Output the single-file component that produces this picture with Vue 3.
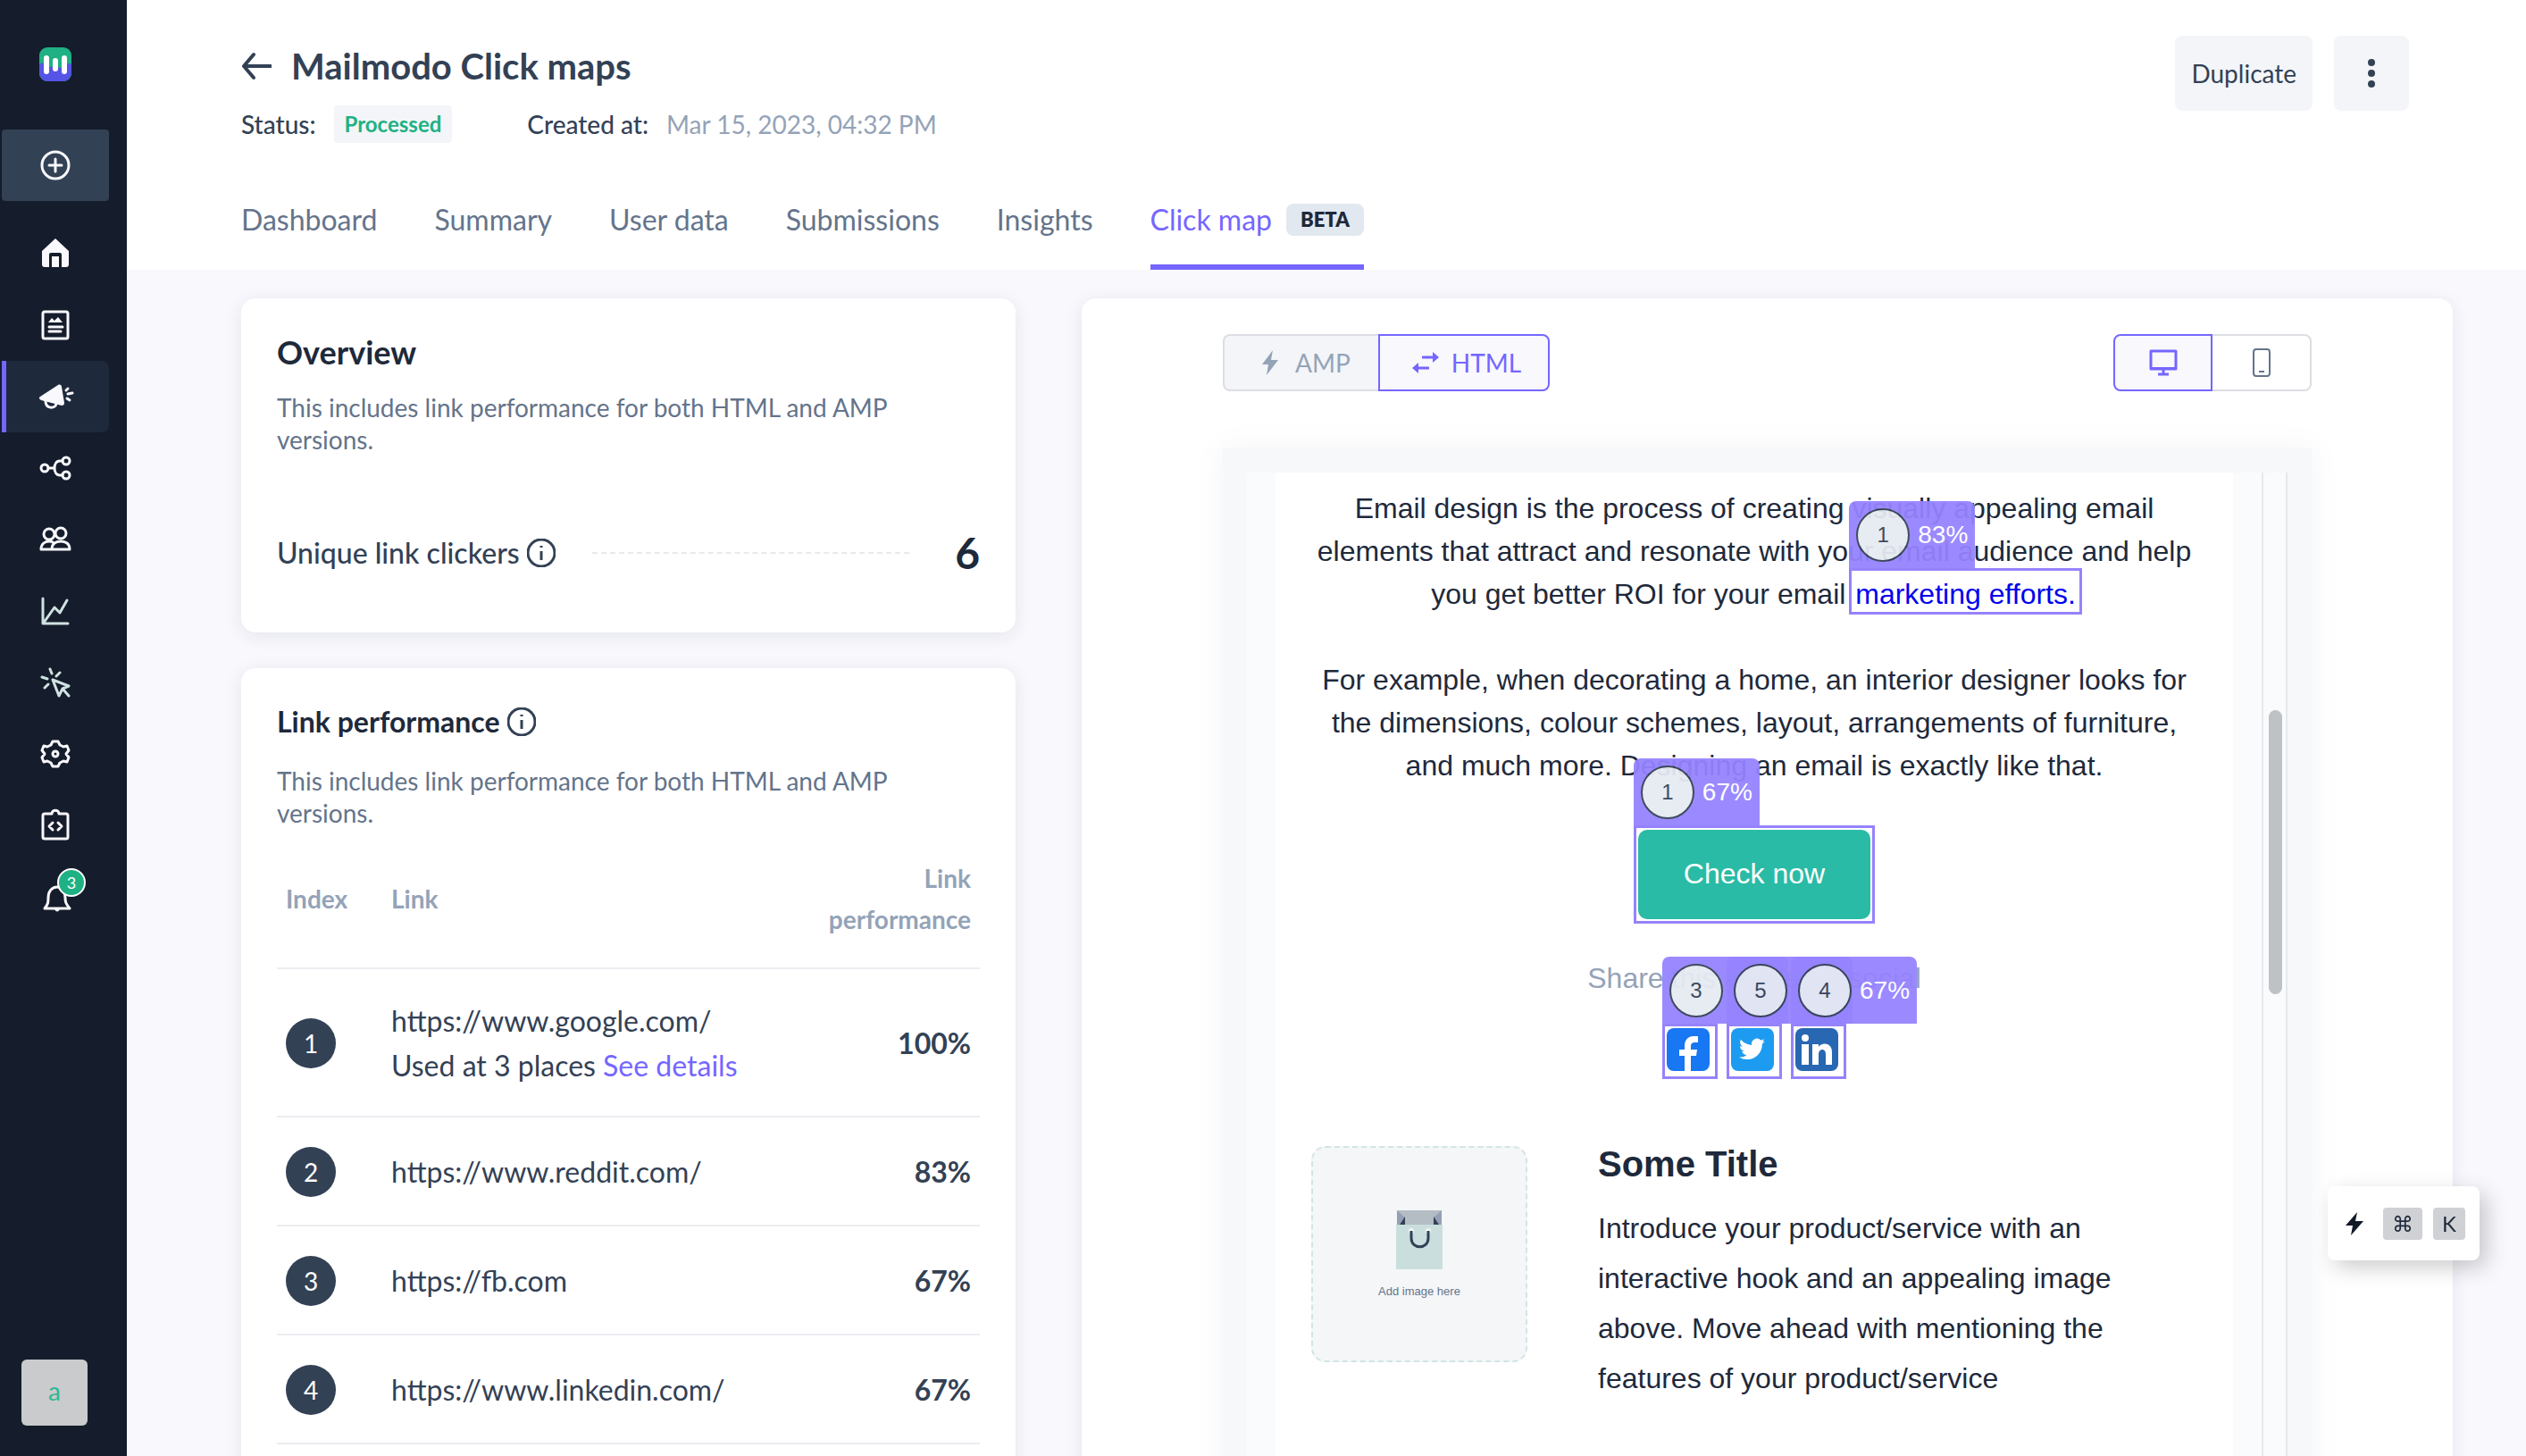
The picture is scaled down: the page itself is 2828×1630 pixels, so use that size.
<script setup>
const tabs = ['Dashboard', 'Summary', 'User data', 'Submissions', 'Insights']

const rows = [
  { n: 1, url: 'https://www.google.com/', uses: 3, share: '100%' },
  { n: 2, url: 'https://www.reddit.com/', share: '83%' },
  { n: 3, url: 'https://fb.com', share: '67%' },
  { n: 4, url: 'https://www.linkedin.com/', share: '67%' },
]
</script>

<template>
  <div class="app">
    <nav class="sidebar" aria-label="Main">
      <a href="#" class="logo" aria-label="Mailmodo">
        <svg width="36" height="38" viewBox="0 0 36 38">
          <rect width="36" height="38" rx="9" fill="#1fb184" />
          <path d="M0 19c4-3 7-1 10 2s6-2 9 0 5 3 8 0 6-4 9-2v10a9 9 0 0 1-9 9H9a9 9 0 0 1-9-9z" fill="#5654e6" />
          <path d="M8 12v15M18 15v9M28 12v15" stroke="#fff" stroke-width="6" stroke-linecap="round" />
        </svg>
      </a>
      <button class="create" aria-label="Create">
        <svg class="icon" viewBox="0 0 32 32">
          <circle cx="16" cy="16" r="15" />
          <path d="M16 9v14M9 16h14" />
        </svg>
      </button>
      <a href="#" class="item" aria-label="Home">
        <svg class="icon" viewBox="0 0 32 32">
          <path class="solid" d="M16 -1 31 13v15a3 3 0 0 1-3 3h-5V17a2 2 0 0 0-2-2H11a2 2 0 0 0-2 2v14H4a3 3 0 0 1-3-3V13zM12 19h8v12h-8z" />
        </svg>
      </a>
      <a href="#" class="item" aria-label="Templates">
        <svg class="icon" viewBox="0 0 32 32">
          <rect x="2" y="1" width="28" height="30" rx="2" />
          <path class="solid" d="M8 13l4-5 3 3 4-4 5 6z" />
          <path d="M9 18h15M9 23h13" />
        </svg>
      </a>
      <a href="#" class="item active" aria-label="Campaigns" aria-current="page">
        <svg class="icon wide" viewBox="0 0 40 32">
          <path class="solid" d="M3 16 23 3c2-1 4 0 4 2l3 18c0 2-1 3-3 3L4 20c-2-1-3-3-1-4z" />
          <path d="M9 21c0 9 11 9 12 3M32 9l2-2M34 13l5-1M33 18l3 2" />
        </svg>
      </a>
      <a href="#" class="item" aria-label="Journeys">
        <svg class="icon wide" viewBox="0 0 40 32">
          <circle cx="8" cy="16" r="4" /><circle cx="32" cy="8" r="4" /><circle cx="32" cy="24" r="4" />
          <path d="M12 16h7M28 8h-3c-4 0-6 4-6 8s2 8 6 8h3" />
        </svg>
      </a>
      <a href="#" class="item" aria-label="Contacts">
        <svg class="icon wide" viewBox="0 0 40 32">
          <circle cx="13" cy="10" r="6" /><circle cx="26" cy="9" r="6" />
          <path d="M15 27H4c0-6 4-9 9-9 2 0 3 0 4 1M16 27c0-6 4-9 10-9s10 3 10 9z" />
        </svg>
      </a>
      <a href="#" class="item" aria-label="Analytics">
        <svg class="icon mint" viewBox="0 0 32 32">
          <path d="M2 2v28h28M3 29l12-17 6 6 8-14" />
        </svg>
      </a>
      <a href="#" class="item" aria-label="Triggers">
        <svg class="icon mint" viewBox="0 0 32 32">
          <path d="M13 13l18 7-7 3-4 8zM24 23l7 8M10 1l2 5M1 10l6 2M21 5l-4 4M8 18l-4 4" />
        </svg>
      </a>
      <a href="#" class="item" aria-label="Settings">
        <svg class="icon" viewBox="0 0 32 32">
          <path d="M13 2h6l2 4 4 2 4-1 2 5-3 4 3 4-2 5-4-1-4 2-2 4h-6l-2-4-4-2-4 1-2-5 3-4-3-4 2-5 4 1 4-2z" />
          <circle cx="16" cy="16" r="3" />
        </svg>
      </a>
      <a href="#" class="item" aria-label="Developers">
        <svg class="icon" viewBox="0 0 32 32">
          <path d="M4 3h8c0-5 8-5 8 0h8q2 0 2 2v24q0 2-2 2H4q-2 0-2-2V5q0-2 2-2zM13 13l-4 4 4 4M19 13l4 4-4 4" />
        </svg>
      </a>
      <a href="#" class="item bell" aria-label="Notifications">
        <svg class="icon wide" viewBox="0 0 40 32">
          <path d="M8 29c4-5 4-7 4-12 0-7 4-12 10-12s9 5 9 12c0 5 1 7 5 12z" />
          <path class="solid" d="M19 30h6q-3 5-6 0z" />
        </svg>
        <span class="count">3</span>
      </a>
      <button class="avatar">a</button>
    </nav>

    <div class="page">
      <header class="header">
        <div class="heading">
          <div class="title-row">
            <a href="#" class="back" aria-label="Back">
              <svg width="34" height="32" viewBox="0 0 34 32">
                <path d="M14 3 3 16l11 13M3 16h30" fill="none" stroke="#334155" stroke-width="4" stroke-linecap="round" stroke-linejoin="round" />
              </svg>
            </a>
            <h1>Mailmodo Click maps</h1>
          </div>
          <div class="meta">
            <span class="label">Status:</span>
            <span class="status">Processed</span>
            <span class="label">Created at:</span>
            <time>Mar 15, 2023, 04:32 PM</time>
          </div>
          <nav class="tabs" aria-label="Campaign">
            <a v-for="t in tabs" :key="t" href="#">{{ t }}</a>
            <a href="#" class="current">Click map <span class="beta">BETA</span></a>
          </nav>
        </div>
        <div class="actions">
          <button>Duplicate</button>
          <button class="more" aria-label="More">
            <svg width="12" height="36" viewBox="0 0 12 36" fill="#334155">
              <circle cx="6" cy="6" r="4" /><circle cx="6" cy="18" r="4" /><circle cx="6" cy="30" r="4" />
            </svg>
          </button>
        </div>
      </header>

      <main class="content">
        <div class="column">
          <section class="card overview">
            <h2>Overview</h2>
            <p class="note">This includes link performance for both HTML and AMP versions.</p>
            <div class="stat">
              <span>Unique link clickers</span>
              <svg class="info" viewBox="0 0 32 32">
                <circle cx="16" cy="16" r="15" /><path d="M16 14v10M16 8v2" />
              </svg>
              <i class="dashes"></i>
              <strong>6</strong>
            </div>
          </section>

          <section class="card links">
            <h3>
              Link performance
              <svg class="info" viewBox="0 0 32 32">
                <circle cx="16" cy="16" r="15" /><path d="M16 14v10M16 8v2" />
              </svg>
            </h3>
            <p class="note">This includes link performance for both HTML and AMP versions.</p>
            <table>
              <thead>
                <tr>
                  <th class="index">Index</th>
                  <th>Link</th>
                  <th class="share">Link performance</th>
                </tr>
              </thead>
              <tbody>
                <tr v-for="r in rows" :key="r.n">
                  <td><span class="num">{{ r.n }}</span></td>
                  <td>
                    {{ r.url }}
                    <div v-if="r.uses">Used at {{ r.uses }} places <a href="#">See details</a></div>
                  </td>
                  <td class="share">{{ r.share }}</td>
                </tr>
              </tbody>
            </table>
          </section>
        </div>

        <section class="card preview">
          <div class="toolbar">
            <div class="group">
              <button class="amp">
                <svg width="20" height="28" viewBox="0 0 20 28"><path d="M13 0 1 16h7L6 28l13-17h-8z" fill="currentColor" /></svg>
                AMP
              </button>
              <button class="html on">
                <svg width="30" height="24" viewBox="0 0 30 24">
                  <path d="M11 6h14M19 18H5" stroke="currentColor" stroke-width="3" />
                  <path d="M23 0l7 6-7 6zM7 12l-7 6 7 6z" fill="currentColor" />
                </svg>
                HTML
              </button>
            </div>
            <div class="group devices">
              <button class="on" aria-label="Desktop">
                <svg width="34" height="30" viewBox="0 0 34 30">
                  <path d="M3 2h28v20H3zM17 22v6M11 28h12" fill="none" stroke="currentColor" stroke-width="3" stroke-linejoin="round" />
                  <path d="M3 20h28v3H3z" fill="currentColor" />
                </svg>
              </button>
              <button aria-label="Mobile">
                <svg width="20" height="32" viewBox="0 0 20 32">
                  <rect x="1" y="1" width="18" height="30" rx="3" fill="none" stroke="currentColor" stroke-width="2" />
                  <path d="M7 26h6" stroke="currentColor" stroke-width="2" />
                </svg>
              </button>
            </div>
          </div>

          <div class="frame">
            <div class="viewport">
              <article class="email">
                <p>
                  Email design is the process of creating visually appealing email elements that attract and
                  resonate with your email audience and help you get better ROI for your email
                  <a href="#" class="hot text">marketing efforts.<span class="tag"><b>1</b>83%</span></a>
                </p>
                <p>
                  For example, when decorating a home, an interior designer looks for the dimensions, colour
                  schemes, layout, arrangements of furniture, and much more. Designing an email is exactly
                  like that.
                </p>
                <a href="#" class="hot cta">Check now<span class="tag"><b>1</b>67%</span></a>
                <p class="share-line">Share this article on social</p>
                <div class="social">
                  <a href="#" class="hot" aria-label="Facebook">
                    <svg width="48" height="48" viewBox="0 0 48 48">
                      <rect width="48" height="48" rx="8" fill="#1877f2" />
                      <path d="M20 48V31h-6v-7h6v-4c0-7 4-11 10-11h5v7h-3c-4 0-5 2-5 4v4h7l-1 7h-6v17z" fill="#fff" />
                    </svg>
                    <span class="tag"><b>3</b></span>
                  </a>
                  <a href="#" class="hot" aria-label="Twitter">
                    <svg width="48" height="48" viewBox="0 0 48 48">
                      <rect width="48" height="48" rx="8" fill="#1d9bf0" />
                      <path transform="translate(9 9) scale(1.2)" d="M23.95 4.57a10 10 0 0 1-2.82.77 4.96 4.96 0 0 0 2.16-2.72c-.95.55-2 .95-3.13 1.18a4.92 4.92 0 0 0-8.38 4.48C7.69 8.1 4.07 6.13 1.64 3.16a4.92 4.92 0 0 0 1.52 6.57 4.9 4.9 0 0 1-2.23-.61v.06a4.93 4.93 0 0 0 3.95 4.83 5 5 0 0 1-2.21.08 4.94 4.94 0 0 0 4.6 3.42A9.87 9.87 0 0 1 0 19.54a14 14 0 0 0 7.55 2.21c9.05 0 14-7.5 14-13.98 0-.21 0-.42-.02-.63A9.94 9.94 0 0 0 24 4.59z" fill="#fff" />
                    </svg>
                    <span class="tag"><b>5</b></span>
                  </a>
                  <a href="#" class="hot" aria-label="LinkedIn">
                    <svg width="48" height="48" viewBox="0 0 48 48">
                      <rect width="48" height="48" rx="8" fill="#2867b2" />
                      <circle cx="11" cy="11" r="4" fill="#fff" />
                      <path d="M7 18h8v23H7zM19 18h7v3c3-5 15-6 15 6v14h-7V29c0-7-8-6-8 0v12h-7z" fill="#fff" />
                    </svg>
                    <span class="tag"><b>4</b>67%</span>
                  </a>
                </div>
                <div class="feature">
                  <figure>
                    <svg width="52" height="66" viewBox="0 0 52 66">
                      <path d="M1 0h50v18H1z" fill="#b4bcc4" />
                      <path d="M1 0l9 8v8H1zM51 0l-9 8v8h9z" fill="#94a0b5" />
                      <path d="M10 7v9H4zM42 7v9h6z" fill="#334155" />
                      <path d="M0 16h52v50H0z" fill="#cadfdd" />
                      <circle cx="17" cy="23" r="3" fill="#eef3f4" /><circle cx="36" cy="23" r="3" fill="#eef3f4" />
                      <path d="M17 23v8c0 13 19 13 19 0v-8" fill="none" stroke="#334155" stroke-width="3" />
                    </svg>
                    <figcaption>Add image here</figcaption>
                  </figure>
                  <div>
                    <h4>Some Title</h4>
                    <p class="intro">
                      Introduce your product/service with an interactive hook and an appealing image above. Move
                      ahead with mentioning the features of your product/service
                    </p>
                  </div>
                </div>
              </article>
              <div class="track"><div class="thumb"></div></div>
            </div>
          </div>
        </section>
      </main>
    </div>

    <button class="shortcut" aria-label="Command menu">
      <svg width="20" height="28" viewBox="0 0 20 28"><path d="M13 1 0 16h8L6 27l14-16h-9z" fill="#111827" /></svg>
      <span class="keys"><kbd>⌘</kbd><kbd>K</kbd></span>
    </button>
  </div>
</template>

<style>
body {
  margin: 0;
  overflow: hidden;
}
</style>

<style scoped>
* {
  box-sizing: border-box;
}
.app {
  display: flex;
  height: 100vh;
  overflow: hidden;
  background: #f8f8fd;
  color: #334155;
  font: 28px/34px Lato, 'Noto Sans', sans-serif;
}
a {
  color: inherit;
  text-decoration: none;
}
button {
  margin: 0;
  padding: 0;
  border: 0;
  background: none;
  color: inherit;
  font: inherit;
  cursor: pointer;
}
h1, h2, h3, h4, p, figure {
  margin: 0;
}

/* Sidebar */
.sidebar {
  display: flex;
  flex-direction: column;
  flex: none;
  width: 142px;
  padding: 53px 20px 34px 2px;
  background: #151c2b;
}
.logo {
  display: flex;
  justify-content: center;
  margin-bottom: 54px;
}
.create, .item {
  display: flex;
  align-items: center;
  justify-content: center;
  flex: none;
  height: 80px;
  border-radius: 4px;
}
.create {
  margin-bottom: 19px;
  background: #334155;
}
.item.active {
  border-left: 5px solid #7566ff;
  border-radius: 0 8px 8px 0;
  padding-right: 5px;
  background: #1e293b;
}
.icon {
  width: 32px;
  height: 32px;
  overflow: visible;
  fill: none;
  stroke: #f8f8fd;
  stroke-width: 3;
  stroke-linecap: round;
  stroke-linejoin: round;
}
.icon.wide {
  width: 40px;
}
.icon .solid {
  fill: #f8f8fd;
  stroke: none;
}
.icon.mint {
  stroke: #cfe2e2;
}
.bell {
  position: relative;
}
.count {
  position: absolute;
  top: 8px;
  left: 62px;
  width: 32px;
  height: 32px;
  border: 2px solid #fff;
  border-radius: 50%;
  background: #1fb184;
  color: #fff;
  font-size: 18px;
  line-height: 28px;
  text-align: center;
}
.avatar {
  width: 74px;
  height: 74px;
  margin: auto 0 0 22px;
  padding-bottom: 4px;
  border-radius: 6px;
  background: #c9cbcd;
  color: #2fb796;
  font-size: 28px;
}

/* Header */
.page {
  flex: 1;
  min-width: 0;
}
.header {
  display: flex;
  justify-content: space-between;
  align-items: flex-start;
  padding: 40px 131px 0 128px;
  background: #fff;
}
.heading {
  padding-top: 10px;
}
.title-row {
  display: flex;
  align-items: center;
  gap: 22px;
}
.back {
  display: flex;
}
h1 {
  font-size: 40px;
  line-height: 48px;
  font-weight: 700;
}
.meta {
  display: flex;
  align-items: center;
  height: 42px;
  margin-top: 20px;
}
.label {
  font-weight: 500;
}
.status {
  margin: 0 84px 0 20px;
  padding: 0 12px;
  border-radius: 4px;
  background: #f3f5f8;
  color: #1fb184;
  font-size: 24px;
  line-height: 42px;
  font-weight: 700;
}
time {
  margin-left: 20px;
  color: #94a3b8;
}
.tabs {
  display: flex;
  gap: 64px;
  margin-top: 67px;
  color: #64748b;
  font-size: 32px;
  line-height: 38px;
}
.tabs a {
  display: flex;
  align-items: center;
  padding-bottom: 31px;
  border-bottom: 6px solid transparent;
}
.tabs .current {
  border-color: #7566ff;
  color: #7566ff;
}
.beta {
  margin-left: 16px;
  padding: 0 16px;
  border-radius: 8px;
  background: #e2e8f0;
  color: #1e293b;
  font-size: 22px;
  line-height: 36px;
  font-weight: 800;
}
.actions {
  display: flex;
  gap: 24px;
}
.actions button {
  height: 84px;
  padding: 0 18px;
  border-radius: 8px;
  background: #f3f5f8;
}
.actions .more {
  display: flex;
  align-items: center;
  justify-content: center;
  width: 84px;
}

/* Cards */
.content {
  display: grid;
  grid-template-columns: 867fr 1535fr;
  gap: 74px;
  padding: 32px 82px 0 128px;
}
.column {
  display: flex;
  flex-direction: column;
  gap: 40px;
  min-width: 0;
}
.card {
  padding: 40px;
  border-radius: 16px;
  background: #fff;
  box-shadow: 0 4px 20px rgba(30, 41, 59, 0.09);
}
.overview {
  padding-bottom: 65px;
}
h2, h3 {
  display: flex;
  align-items: center;
  color: #1e293b;
  font-size: 36px;
  line-height: 40px;
  font-weight: 700;
}
h3 {
  gap: 8px;
  font-size: 32px;
}
.note {
  margin-top: 24px;
  color: #64748b;
  line-height: 36px;
}
.links .note {
  margin-top: 28px;
}
.info {
  flex: none;
  width: 32px;
  height: 32px;
  fill: none;
  stroke: #334155;
  stroke-width: 3;
}
.stat {
  display: flex;
  align-items: center;
  gap: 8px;
  margin-top: 85px;
  font-size: 32px;
  line-height: 48px;
  font-weight: 500;
}
.dashes {
  flex: 1;
  margin: 0 43px 0 33px;
  border-top: 2px dashed #e9eaee;
}
.stat strong {
  color: #1e293b;
  font-size: 48px;
  font-weight: 700;
}
.links {
  flex: 1;
  padding-bottom: 200px;
}
table {
  width: 100%;
  border-collapse: separate;
  border-spacing: 0;
  table-layout: fixed;
}
th, td {
  padding: 32px 10px;
  border-bottom: 2px solid #ecedf1;
  text-align: left;
  vertical-align: middle;
}
th {
  padding-bottom: 31px;
  color: #94a3b8;
  line-height: 46px;
  font-weight: 700;
}
td {
  padding: 33px 10px 31px;
  font-size: 32px;
  line-height: 50px;
}
td a {
  color: #7566ff;
}
th.index {
  width: 118px;
}
.share {
  width: 200px;
  text-align: right;
}
td.share {
  font-weight: 700;
}
.num {
  display: block;
  width: 56px;
  height: 56px;
  border-radius: 50%;
  background: #334155;
  color: #fff;
  font-size: 28px;
  line-height: 56px;
  text-align: center;
}

/* Preview */
.preview {
  padding: 40px 158px 0;
}
.toolbar, .group {
  display: flex;
  justify-content: space-between;
}
.group button {
  display: flex;
  align-items: center;
  height: 64px;
  border: 2px solid #dcdee3;
  border-radius: 0 8px 8px 0;
  color: #64748b;
}
.group button:first-child {
  border-radius: 8px 0 0 8px;
  border-right: 0;
}
.group .on, .group .on:first-child {
  border: 2px solid #7566ff;
  background: #f8f8fd;
  color: #7566ff;
}
.group .amp {
  gap: 18px;
  padding: 0 31px 0 41px;
  background: #f3f5f8;
  color: #94a3b8;
}
.group .html {
  gap: 14px;
  padding: 0 30px 0 36px;
}
.devices button {
  justify-content: center;
  width: 111px;
}
.devices button:last-child {
  border-left: 0;
}
.frame {
  margin-top: 64px;
  padding: 27px 27px 0;
  background: #f6f8fa;
  box-shadow: 0 0 30px rgba(100, 116, 139, 0.08);
}
.viewport {
  display: flex;
  background: #fafbfd;
}
.email {
  flex: 1;
  margin: 0 32px;
  padding: 16px 40px 160px;
  background: #fff;
  color: #1e293b;
  font: 32px/48px 'Liberation Sans', Arial, sans-serif;
  text-align: center;
}
.email p + p {
  margin-top: 48px;
}
.hot {
  position: relative;
  outline: 3px solid #9583fb;
  outline-offset: 2px;
}
.hot.text {
  padding: 6px 2px 0;
  color: #0000ee;
}
.tag {
  position: absolute;
  left: -5px;
  bottom: calc(100% + 5px);
  display: flex;
  align-items: center;
  gap: 9px;
  min-width: 141px;
  height: 75px;
  padding: 0 8px;
  border-radius: 8px 8px 0 0;
  background: #9583ff;
  color: #fff;
  font-size: 28px;
  line-height: 36px;
  opacity: 0.94;
}
.tag b {
  width: 60px;
  height: 60px;
  border: 2px solid #334155;
  border-radius: 50%;
  background: #e6eaf2;
  color: #334155;
  font-size: 24px;
  line-height: 56px;
  font-weight: 400;
}
.cta {
  display: block;
  width: fit-content;
  margin: 48px auto 0;
  padding: 0 51px 2px;
  border-radius: 10px;
  background: #29bba6;
  color: #fff;
  line-height: 98px;
}
.cta.hot::before {
  content: '';
  position: absolute;
  inset: -5px;
  border: 3px solid #9583fb;
}
.cta.hot {
  outline: 0;
}
.share-line {
  margin-top: 42px;
  color: #94a3b8;
}
.social {
  display: flex;
  justify-content: center;
  gap: 20px;
  margin-top: 32px;
}
.social .hot {
  width: 52px;
  height: 52px;
}
.social svg {
  display: block;
}
.feature {
  display: flex;
  align-items: flex-start;
  gap: 79px;
  margin-top: 80px;
  text-align: left;
}
figure {
  display: flex;
  flex-direction: column;
  align-items: center;
  flex: none;
  width: 242px;
  height: 242px;
  padding-top: 70px;
  border: 2px dashed #d3e5e3;
  border-radius: 16px;
  background: #f4f6f8;
}
figcaption {
  margin-top: 17px;
  color: #64748b;
  font-size: 13px;
  line-height: 16px;
}
h4 {
  font-size: 40px;
  line-height: 40px;
}
.intro {
  margin-top: 24px;
  line-height: 56px;
}
.track {
  flex: none;
  width: 29px;
  padding: 266px 4px 0 6px;
  border: solid #e6e8ee;
  border-width: 0 2px;
}
.thumb {
  height: 318px;
  border-radius: 8px;
  background: #bfc2c5;
}

.shortcut {
  position: fixed;
  right: 52px;
  bottom: 219px;
  display: flex;
  align-items: center;
  gap: 22px;
  height: 83px;
  padding: 0 16px 0 20px;
  border-radius: 8px;
  background: #fff;
  box-shadow: 8px 8px 24px rgba(0, 0, 0, 0.2);
}
.keys {
  display: flex;
  gap: 12px;
}
kbd {
  min-width: 36px;
  padding: 0 10px;
  border-radius: 4px;
  background: #cfd1d4;
  color: #1e293b;
  font: 24px/36px Lato, 'DejaVu Sans', sans-serif;
}
</style>
